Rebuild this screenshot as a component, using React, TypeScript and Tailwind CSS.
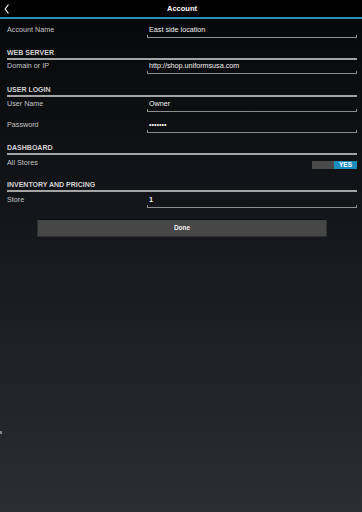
import React from "react";

const FieldInput = ({ value, bold }: { value: string; bold?: boolean }) => (
  <div className="flex w-[210px] flex-col">
    <div
      className={`h-[10px] pl-[2px] text-[7.2px] leading-[10px] text-[#f2f2f2] ${bold ? "font-bold" : ""}`}
    >
      {value}
    </div>
    <div className="h-[3px] border-x border-b border-[#8c8c8c]" />
  </div>
);

const FieldRow = ({
  label,
  value,
  pt,
  bold,
}: {
  label: string;
  value: string;
  pt: string;
  bold?: boolean;
}) => (
  <div className={`flex items-start justify-between pl-[7px] pr-[5px] ${pt}`}>
    <span className="text-[7.2px] leading-[10px] text-[#c4c4c4]">{label}</span>
    <FieldInput value={value} bold={bold} />
  </div>
);

const Section = ({ title, mt }: { title: string; mt: string }) => (
  <div className={`ml-[7px] mr-[5px] ${mt}`}>
    <div className="text-[7px] font-bold leading-[8px] text-[#d2d2d2]">{title}</div>
    <div className="mt-[1px] h-[2px] bg-[#a4a4a4]" />
  </div>
);

export default function App() {
  return (
    <div className="relative flex min-h-[512px] w-full flex-col bg-gradient-to-b from-[#060708] to-[#2a2e35] font-['Liberation_Sans',Arial,sans-serif]">
      <header className="relative flex h-[19px] items-center justify-center border-b-2 border-[#2a8db6] bg-black">
        <svg
          className="absolute left-[4px] top-[4px]"
          width="6"
          height="10"
          viewBox="0 0 6 10"
          fill="none"
        >
          <polyline points="4.5,0.5 1.2,5 4.5,9.5" stroke="#f0f0f0" strokeWidth="1.2" />
        </svg>
        <span className="ml-[2px] text-[7.5px] font-bold leading-[10px] text-white">Account</span>
      </header>

      <FieldRow label="Account Name" value="East side location" pt="pt-[6px]" />

      <Section title="WEB SERVER" mt="mt-[11px]" />
      <FieldRow label="Domain or IP" value="http://shop.uniformsusa.com" pt="pt-[1px]" />

      <Section title="USER LOGIN" mt="mt-[12px]" />
      <FieldRow label="User Name" value="Owner" pt="pt-[2px]" />
      <FieldRow label="Password" value="•••••••" pt="pt-[8px]" />

      <Section title="DASHBOARD" mt="mt-[11px]" />
      <div className="flex items-start justify-between pl-[7px] pr-[5px] pt-[3px]">
        <span className="text-[7.2px] leading-[10px] text-[#c4c4c4]">All Stores</span>
        <div className="mt-[3px] flex h-[8px] w-[45px]">
          <div className="w-[22px] bg-[#4a4a4a]" />
          <div className="flex flex-1 items-center justify-center bg-[#1c8cbd] text-[6.5px] font-bold leading-[8px] text-white">
            YES
          </div>
        </div>
      </div>

      <Section title="INVENTORY AND PRICING" mt="mt-[12px]" />
      <FieldRow label="Store" value="1" pt="pt-[3px]" bold />

      <button className="ml-[37px] mt-[11px] flex h-[18px] w-[290px] items-center justify-center border border-[#2e2e2e] border-t-[#0a0c14] bg-[#474747] text-[6.5px] font-bold leading-[8px] text-[#f0f0f0]">
        Done
      </button>

      <div className="absolute left-0 top-[431px] h-[3px] w-[2px] bg-[#8a8a8a]" />
    </div>
  );
}
